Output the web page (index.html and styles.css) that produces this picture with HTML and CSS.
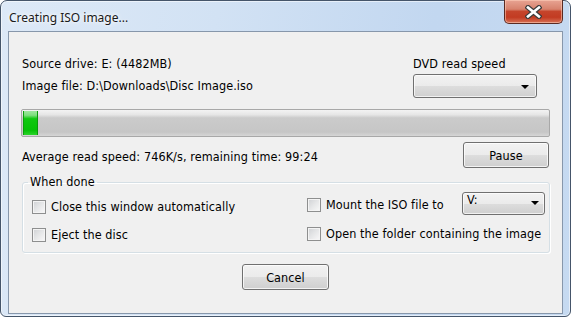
FILE: index.html
```html
<!DOCTYPE html>
<html>
<head>
<meta charset="utf-8">
<link rel="stylesheet" href="styles.css">
</head>
<body>
<div class="window">
  <div class="titlebar">
    <span class="title">Creating ISO image...</span>
    <div class="close">
      <svg width="17" height="14" viewBox="0 0 17 14">
        <path d="M3 2.5 L14 11.5 M14 2.5 L3 11.5" stroke="#3c3c3c" stroke-width="5" stroke-linecap="square" fill="none"/>
        <path d="M3 2.5 L14 11.5 M14 2.5 L3 11.5" stroke="#ffffff" stroke-width="2.6" stroke-linecap="square" fill="none"/>
      </svg>
    </div>
  </div>
  <div class="client">
    <div class="top">
      <div class="info">
        <div class="line">Source drive: E: (4482MB)</div>
        <div class="line">Image file: D:\Downloads\Disc Image.iso</div>
      </div>
      <div class="speed">
        <div class="line">DVD read speed</div>
        <div class="combo combo-speed"><span></span><i class="arrow"></i></div>
      </div>
    </div>
    <div class="progress"><div class="chunk"></div></div>
    <div class="status-row">
      <div class="status">Average read speed: 746K/s, remaining time: 99:24</div>
      <div class="button pause">Pause</div>
    </div>
    <fieldset class="group">
      <legend>When done</legend>
      <div class="group-grid">
        <div class="col-left">
          <label class="opt"><span class="check"></span>Close this window automatically</label>
          <label class="opt"><span class="check"></span>Eject the disc</label>
        </div>
        <div class="col-right">
          <div class="mount-row">
            <label class="opt mount"><span class="check"></span>Mount the ISO file to</label>
            <div class="combo combo-drive"><span>V:</span><i class="arrow"></i></div>
          </div>
          <label class="opt open"><span class="check"></span>Open the folder containing the image</label>
        </div>
      </div>
    </fieldset>
    <div class="button cancel">Cancel</div>
  </div>
</div>
</body>
</html>
```
FILE: styles.css
```css
* { box-sizing: border-box; }
html, body { margin: 0; padding: 0; }
body {
  width: 571px;
  height: 317px;
  overflow: hidden;
  background: #ffffff;
  font-family: "DejaVu Sans Condensed", "DejaVu Sans", sans-serif;
  font-size: 12.5px;
  letter-spacing: 0.1px;
  color: #000;
}
.window {
  width: 571px;
  height: 317px;
  border: 1px solid #45556a;
  border-radius: 7px 7px 6px 6px;
  background: linear-gradient(100deg, #dde9f7 0%, #d2e2f4 35%, #c2d7f0 70%, #c6daf1 100%);
  box-shadow: inset 0 0 0 1px rgba(255,255,255,0.55);
  display: flex;
  flex-direction: column;
  padding: 0 7px 2px 7px;
}
.titlebar {
  height: 30px;
  display: flex;
  align-items: flex-start;
}
.title {
  font-family: "Noto Sans", "Open Sans", sans-serif;
  font-size: 12px;
  letter-spacing: 0;
  color: #1a1a1a;
  margin-left: 1px;
  line-height: 16px;
  margin-top: 9px;
  text-shadow: 0 0 6px #fff, 0 0 3px #fff;
}
.close {
  margin-left: auto;
  margin-top: -1px;
  width: 59px;
  height: 24px;
  border: 1px solid #5a2a22;
  border-top: none;
  border-radius: 0 0 5px 5px;
  background: linear-gradient(#e8a493 0%, #d7826d 40%, #c5442b 50%, #c23b22 75%, #d77257 100%);
  box-shadow: inset 0 0 0 1px rgba(255,210,190,0.55);
  display: flex;
  align-items: center;
  justify-content: center;
}
.close svg { display: block; }
.client {
  flex: 1;
  border: 1px solid #8797ab;
  background: #f0f0f0;
  padding: 21px 12px 0 12px;
  display: flex;
  flex-direction: column;
}
.line { line-height: 22px; white-space: nowrap; }
.top {
  display: flex;
  justify-content: space-between;
  padding-left: 1px;
}
.speed {
  width: 124px;
  margin-right: 13px;
}
.combo {
  border: 1px solid #707070;
  border-radius: 3px;
  background: linear-gradient(#f2f2f2 0%, #ebebeb 50%, #dddddd 51%, #cfcfcf 100%);
  box-shadow: inset 0 0 0 1px rgba(255,255,255,0.7);
  display: flex;
  justify-content: space-between;
  align-items: center;
}
.arrow {
  width: 0;
  height: 0;
  border-left: 4px solid transparent;
  border-right: 4px solid transparent;
  border-top: 4px solid #000;
}
.combo-speed {
  height: 24px;
  margin-top: -1px;
  padding: 1px 7px 0 6px;
}
.progress {
  margin-top: 11px;
  height: 28px;
  border: 1px solid #a8a8a8;
  border-radius: 2px;
  background: linear-gradient(#f3f3f3 0%, #e6e6e6 18%, #cbcbcb 30%, #c6c6c6 85%, #d6d6d6 100%);
  padding: 1px;
  display: flex;
}
.chunk {
  width: 15px;
  background: linear-gradient(#9ee79e 0%, #7dde7d 18%, #10c810 32%, #06c106 80%, #2ad42a 100%);
  border-right: 1px solid #0a9a0a;
  border-left: 1px solid #0b9f0b;
}
.status-row {
  margin-top: 5px;
  display: flex;
  justify-content: space-between;
  align-items: flex-start;
}
.status {
  line-height: 22px;
  margin-top: 4px;
  padding-left: 1px;
}
.button {
  border: 1px solid #707070;
  border-radius: 3px;
  background: linear-gradient(#f2f2f2 0%, #ebebeb 50%, #dddddd 51%, #cfcfcf 100%);
  box-shadow: inset 0 0 0 1px rgba(255,255,255,0.75);
  display: flex;
  align-items: center;
  justify-content: center;
}
.pause {
  width: 86px;
  height: 26px;
  margin-right: 1px;
}
.group {
  margin: 6px 0 0 1px;
  padding: 0;
  border: 1px solid #d5dfe5;
  border-radius: 3px;
  box-shadow: inset 1px 1px 0 #ffffff, 1px 1px 0 #ffffff;
  min-width: 0;
}
.group legend {
  margin-left: 5px;
  padding: 0 2px;
  line-height: 16px;
}
.group-grid {
  display: grid;
  grid-template-columns: 1fr 238px;
  padding: 2px 4px 9px 9px;
}
.col-left {
  display: flex;
  flex-direction: column;
  gap: 12px;
  padding-top: 7px;
}
.col-right {
  display: flex;
  flex-direction: column;
}
.opt {
  display: flex;
  align-items: center;
  gap: 5px;
  line-height: 16px;
  white-space: nowrap;
}
.check {
  width: 14px;
  height: 14px;
  border: 1px solid #8e8f8f;
  background: linear-gradient(135deg, #cfd1d4 0%, #e6e7e8 50%, #f9f9f9 100%);
  box-shadow: inset 0 0 0 1px #f4f4f4;
  flex: none;
}
.mount-row {
  display: flex;
  justify-content: space-between;
  align-items: flex-start;
}
.mount { margin-top: 5px; }
.combo-drive {
  width: 83px;
  height: 23px;
  padding: 0 5px 0 4px;
  align-items: flex-start;
}
.combo-drive span { line-height: 14px; }
.combo-drive .arrow { margin-top: 8px; }
.open { margin-top: 11px; }
.cancel {
  align-self: center;
  width: 87px;
  height: 26px;
  margin-top: 11px;
}
```
